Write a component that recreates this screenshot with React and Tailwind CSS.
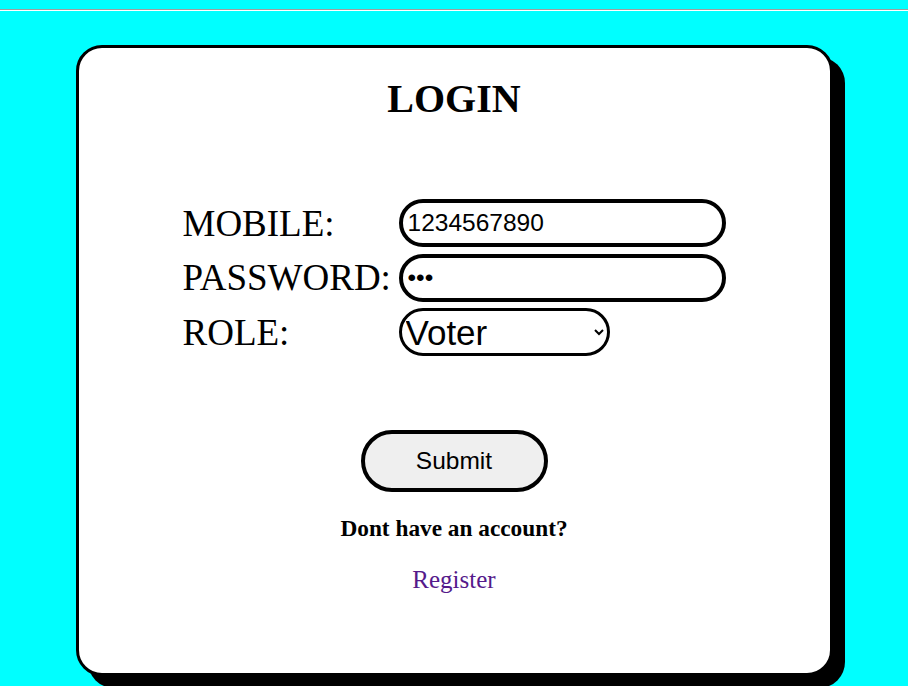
export default function App() {
  return (
    <div className="h-screen overflow-hidden bg-[#00ffff] font-['Liberation_Serif',serif] text-black">
      {/* top rule */}
      <div className="pt-[9px]">
        <div className="h-px bg-[#9e9e9e]" />
        <div className="h-px bg-white" />
      </div>

      {/* Card */}
      <div className="mx-auto mt-[34px] h-[631px] w-[757px] rounded-[26px] border-[3px] border-black bg-white pt-[28px] shadow-[12px_12px_0_#000]">
        <h1 className="text-center text-[40px] font-bold leading-[46px]">LOGIN</h1>

        <div className="mx-auto mt-[77px] grid w-[543px] grid-cols-[216px_327px] items-center gap-y-[6.5px]">
          <label className="text-[37px] leading-[41px]">MOBILE:</label>
          <input
            type="text"
            defaultValue="1234567890"
            className="h-[48px] w-[327px] rounded-full border-4 border-black bg-white px-[5px] font-['Liberation_Sans',Arial,sans-serif] text-[24.5px] outline-none"
          />

          <label className="text-[37px] leading-[41px]">PASSWORD:</label>
          <input
            type="password"
            defaultValue="abc"
            className="h-[48px] w-[327px] rounded-full border-4 border-black bg-white px-[5px] font-['Liberation_Sans',Arial,sans-serif] text-[24.5px] outline-none"
          />

          <label className="text-[37px] leading-[41px]">ROLE:</label>
          <select
            defaultValue="voter"
            className="h-[48px] w-[211px] rounded-full border-[3px] border-black bg-white pl-0 pr-[6px] font-['Liberation_Sans',Arial,sans-serif] text-[35px] outline-none"
          >
            <option value="voter">Voter</option>
            <option value="group">Group</option>
          </select>
        </div>

        <div className="mt-[74px] flex justify-center">
          <button className="h-[62px] w-[187px] rounded-full border-4 border-black bg-[#efefef] font-['Liberation_Sans',Arial,sans-serif] text-[24.5px]">
            Submit
          </button>
        </div>

        <p className="mt-[23px] text-center text-[23.3px] font-bold leading-[26px]">Dont have an account?</p>

        <p className="mt-[25px] text-center text-[25px] leading-[28px]">
          <a href="#" className="text-[#551a8b]">Register</a>
        </p>
      </div>
    </div>
  );
}
